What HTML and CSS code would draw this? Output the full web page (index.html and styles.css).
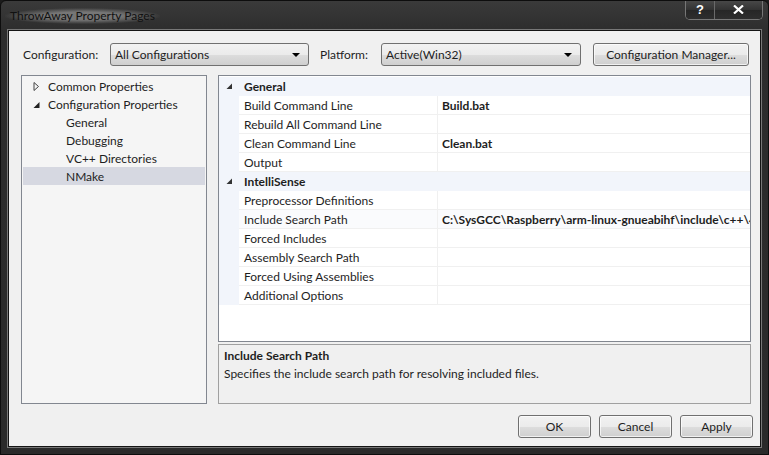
FILE: index.html
```html
<!DOCTYPE html>
<html>
<head>
<meta charset="utf-8">
<link rel="stylesheet" href="styles.css">
</head>
<body>
<div class="window">
  <div class="titlebar">
    <div class="title">ThrowAway Property Pages</div>
    <div class="capbtns">
      <div class="capbtn help">?</div>
      <div class="capbtn close">
        <svg width="11" height="9" viewBox="0 0 11 9"><path d="M1 0.5 L10 8.5 M10 0.5 L1 8.5" stroke="#fff" stroke-width="2.2"/></svg>
      </div>
    </div>
  </div>
  <div class="client">
    <div class="toolbar">
      <span class="lbl lbl-config">Configuration:</span>
      <div class="combo combo-config"><span>All Configurations</span><i class="arrow"></i></div>
      <span class="lbl lbl-platform">Platform:</span>
      <div class="combo combo-platform"><span>Active(Win32)</span><i class="arrow"></i></div>
      <div class="btn btn-cm">Configuration Manager...</div>
    </div>
    <div class="panels">
      <div class="tree">
        <div class="titem lvl0"><svg class="tw" width="7" height="9" viewBox="0 0 7 9"><path d="M1 0.5 L5.5 4.5 L1 8.5 Z" fill="none" stroke="#444" stroke-width="1"/></svg><span>Common Properties</span></div>
        <div class="titem lvl0"><svg class="tw" width="7" height="9" viewBox="0 0 7 9"><path d="M6.5 2 L6.5 8 L0.5 8 Z" fill="#222"/></svg><span>Configuration Properties</span></div>
        <div class="titem lvl1"><span>General</span></div>
        <div class="titem lvl1"><span>Debugging</span></div>
        <div class="titem lvl1"><span>VC++ Directories</span></div>
        <div class="titem lvl1 sel"><span>NMake</span></div>
      </div>
      <div class="right">
        <div class="grid">
          <div class="row cat"><div class="gut"><svg width="7" height="7" viewBox="0 0 7 7"><path d="M6 0.5 L6 6 L0.5 6 Z" fill="#333"/></svg></div><div class="name">General</div></div>
          <div class="row"><div class="gut"></div><div class="name">Build Command Line</div><div class="val">Build.bat</div></div>
          <div class="row"><div class="gut"></div><div class="name">Rebuild All Command Line</div><div class="val"></div></div>
          <div class="row"><div class="gut"></div><div class="name">Clean Command Line</div><div class="val">Clean.bat</div></div>
          <div class="row"><div class="gut"></div><div class="name">Output</div><div class="val"></div></div>
          <div class="row cat"><div class="gut"><svg width="7" height="7" viewBox="0 0 7 7"><path d="M6 0.5 L6 6 L0.5 6 Z" fill="#333"/></svg></div><div class="name">IntelliSense</div></div>
          <div class="row"><div class="gut"></div><div class="name">Preprocessor Definitions</div><div class="val"></div></div>
          <div class="row hot"><div class="gut"></div><div class="name">Include Search Path</div><div class="val">C:\SysGCC\Raspberry\arm-linux-gnueabihf\include\c++\4.6.3;C:\SysGCC</div></div>
          <div class="row"><div class="gut"></div><div class="name">Forced Includes</div><div class="val"></div></div>
          <div class="row"><div class="gut"></div><div class="name">Assembly Search Path</div><div class="val"></div></div>
          <div class="row"><div class="gut"></div><div class="name">Forced Using Assemblies</div><div class="val"></div></div>
          <div class="row"><div class="gut"></div><div class="name">Additional Options</div><div class="val"></div></div>
        </div>
        <div class="desc">
          <div class="desc-title">Include Search Path</div>
          <div class="desc-text">Specifies the include search path for resolving included files.</div>
        </div>
      </div>
    </div>
    <div class="footer">
      <div class="btn btn-f">OK</div>
      <div class="btn btn-f">Cancel</div>
      <div class="btn btn-f">Apply</div>
    </div>
  </div>
</div>
</body>
</html>
```
FILE: styles.css
```css
html, body {
  margin: 0;
  padding: 0;
  background: #1b1b1b;
}
body {
  font-family: Lato, "Open Sans", sans-serif;
  font-size: 12px;
  color: #1e1e1e;
}
.window {
  width: 769px;
  height: 455px;
  box-sizing: border-box;
  background: linear-gradient(180deg, #3a3a3a 0px, #2d2d2d 30px, #2a2a2a 100%);
  border: 1px solid #0d0d0d;
  border-radius: 6px 6px 0 0;
  display: flex;
  flex-direction: column;
  overflow: hidden;
}
.titlebar {
  height: 29px;
  display: flex;
  align-items: flex-start;
  justify-content: space-between;
  padding-left: 4px;
  padding-right: 5px;
  flex: none;
}
.title {
  margin-top: 7px;
  font-size: 12px;
  color: #111;
  padding: 0 5px;
  background: radial-gradient(ellipse at center, rgba(125,125,125,0.9) 35%, rgba(90,90,90,0) 72%);
  line-height: 16px;
}
.capbtns {
  display: flex;
  margin-top: -1px;
  border: 1px solid #777;
  border-top: none;
  border-radius: 0 0 5px 5px;
  overflow: hidden;
  box-shadow: inset 0 0 0 1px #1a1a1a;
}
.capbtn {
  height: 19px;
  display: flex;
  align-items: center;
  justify-content: center;
  background: linear-gradient(180deg, #4a4a4a, #333 50%, #262626 51%, #2e2e2e);
  color: #fff;
  font-weight: bold;
  font-size: 13px;
  font-family: "Liberation Sans", sans-serif;
}
.help {
  width: 28px;
  border-right: 1px solid #6a6a6a;
}
.close {
  width: 47px;
}
.client {
  flex: 1;
  margin: 0 7px 7px 7px;
  background: #f0f0f0;
  border: 1px solid #141414;
  box-shadow: 0 0 0 1px #777;
  display: flex;
  flex-direction: column;
  padding: 12px 9px 8px 12px;
}
.toolbar {
  display: flex;
  align-items: center;
  height: 23px;
}
.lbl {
  color: #1e1e1e;
  flex: none;
}
.lbl-config {
  margin-left: 2px;
  width: 87px;
}
.lbl-platform {
  margin-left: 11px;
  width: 61px;
}
.combo {
  flex: none;
  height: 23px;
  box-sizing: border-box;
  border: 1px solid #707070;
  border-radius: 3px;
  background: linear-gradient(180deg, #f2f2f2 0%, #ebebeb 50%, #dddddd 51%, #cfcfcf 100%);
  display: flex;
  align-items: center;
  justify-content: space-between;
  padding: 0 8px 0 4px;
}
.combo-config { width: 199px; }
.combo-platform { width: 200px; }
.arrow {
  width: 0;
  height: 0;
  border-left: 4px solid transparent;
  border-right: 4px solid transparent;
  border-top: 4px solid #000;
  margin-top: 1px;
}
.btn {
  flex: none;
  height: 23px;
  box-sizing: border-box;
  border: 1px solid #707070;
  border-radius: 3px;
  background: linear-gradient(180deg, #f2f2f2 0%, #ebebeb 50%, #dddddd 51%, #cfcfcf 100%);
  box-shadow: inset 0 0 0 1px rgba(255,255,255,0.7);
  display: flex;
  align-items: center;
  justify-content: center;
}
.btn-cm {
  margin-left: 12px;
  width: 156px;
}
.panels {
  margin-top: 9px;
  display: flex;
  gap: 11px;
  height: 329px;
}
.tree {
  flex: none;
  width: 186px;
  box-sizing: border-box;
  border: 1px solid #828790;
  background: #f5f5f5;
  padding: 1px 1px;
}
.titem {
  height: 18px;
  display: flex;
  align-items: center;
  white-space: nowrap;
}
.titem.lvl0 { padding-left: 10px; }
.titem.lvl1 { padding-left: 43px; }
.titem .tw { width: 7px; margin-right: 8px; flex: none; }
.titem.sel { background: #d6d8e1; }
.right {
  flex: 1;
  min-width: 0;
  display: flex;
  flex-direction: column;
  gap: 2px;
}
.grid {
  flex: 1;
  box-sizing: border-box;
  border: 1px solid #828790;
  background: #fff;
  padding-top: 1px;
  overflow: hidden;
}
.row {
  height: 19px;
  display: flex;
  align-items: stretch;
}
.gut {
  width: 20px;
  flex: none;
  background: #f2f5fb;
  display: flex;
  align-items: center;
  justify-content: center;
}
.name {
  width: 199px;
  flex: none;
  padding-left: 5px;
  box-sizing: border-box;
  border-bottom: 1px solid #f0f0f0;
  border-right: 1px solid #f0f0f0;
  display: flex;
  align-items: center;
  white-space: nowrap;
}
.val {
  flex: 1;
  min-width: 0;
  padding-left: 4px;
  border-bottom: 1px solid #f0f0f0;
  display: flex;
  align-items: center;
  white-space: nowrap;
  overflow: hidden;
  font-weight: bold;
}
.row.cat .name {
  flex: 1;
  font-weight: bold;
  background: #f2f5fb;
  border: none;
  width: auto;
}
.row.hot .name, .row.hot .val {
  background: #fafbfd;
}
.desc {
  flex: none;
  height: 60px;
  box-sizing: border-box;
  border: 1px solid #a0a0a0;
  background: #f0f0f0;
  padding: 2px 5px;
}
.desc-title {
  font-weight: bold;
  line-height: 18px;
}
.desc-text {
  line-height: 18px;
}
.footer {
  margin-top: auto;
  margin-right: -2px;
  display: flex;
  justify-content: flex-end;
  gap: 8px;
}
.btn-f {
  width: 73px;
}
```
